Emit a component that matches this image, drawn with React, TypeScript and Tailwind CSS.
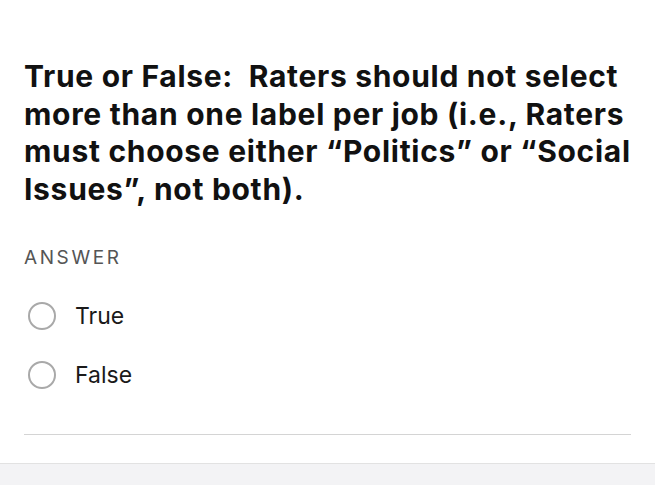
export default function App() {
  return (
    <div className="w-[655px] h-[485px] bg-white flex flex-col overflow-hidden" style={{ fontFamily: 'Inter, "Noto Sans", sans-serif' }}>
      <div className="flex-1 px-6 pt-[58px]">
        <h1 className="text-[30px] leading-[37.5px] font-bold text-[#111] tracking-[0.7px] whitespace-nowrap">
          True or False:&nbsp; Raters should not select<br />
          more than one label per job (i.e., Raters<br />
          must choose either “Politics” or “Social<br />
          Issues”, not both).
        </h1>
        <div className="mt-[40px] text-[19px] tracking-[2.6px] text-[#555] leading-none">ANSWER</div>
        <div className="mt-[35px] flex flex-col gap-[31px] pl-1">
          {["True", "False"].map((t) => (
            <label key={t} className="flex items-center gap-[19px]">
              <span className="w-7 h-7 rounded-full border-[2.5px] border-[#a9a9a9] bg-white" />
              <span className="text-[23px] text-[#1a1a1a] leading-none">{t}</span>
            </label>
          ))}
        </div>
        <div className="mt-[45px] h-px bg-[#d4d4d4]" />
      </div>
      <div className="h-[22px] bg-[#f3f3f5] border-t border-[#e2e2e2]" />
    </div>
  );
}
